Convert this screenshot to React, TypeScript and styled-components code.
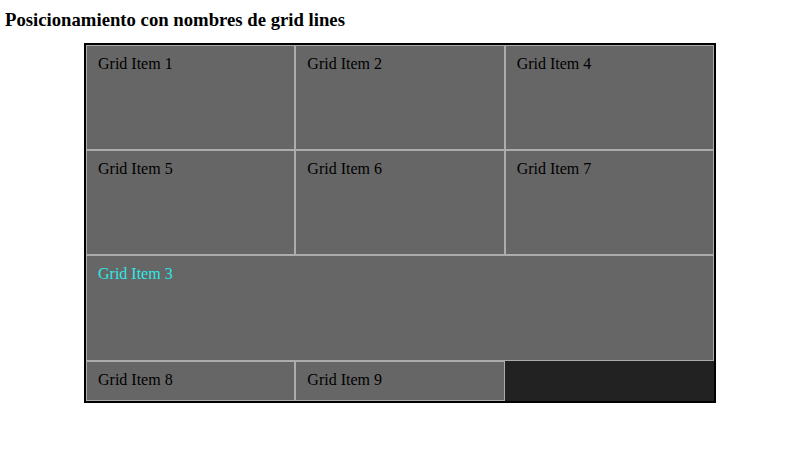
import React from 'react'
import styled, { createGlobalStyle } from 'styled-components'

const GlobalStyle = createGlobalStyle`
  body {
    margin: 0;
    font-family: "Liberation Serif", "Times New Roman", serif;
    background: #fff;
  }
`

const Title = styled.h3`
  margin: 0;
  padding: 9px 5px 0;
  font-size: 18.72px;
  font-weight: bold;
  color: #000;
`

const Container = styled.div`
  box-sizing: border-box;
  width: 632px;
  margin: 12px auto 0;
  display: grid;
  grid-template-columns:
    [col-a] 1fr [col-b] 1fr [col-c] 1fr [col-end];
  grid-template-rows:
    [row-a] 105px [row-b] 105px [row-c] 106px [row-d] auto [row-end];
  background: #222;
  border: 2px solid #000;
`

const Item = styled.div<{ $highlight?: boolean }>`
  padding: 9px 10px 11px 11px;
  background: #666;
  border: 1px solid #acacac;
  font-size: 16px;
  line-height: 18px;
  color: ${(p) => (p.$highlight ? '#2ee8e8' : '#000')};
`

const WideItem = styled(Item)`
  grid-column: col-a / col-end;
  grid-row: row-c / row-d;
`

export default function App() {
  return (
    <>
      <GlobalStyle />
      <Title>Posicionamiento con nombres de grid lines</Title>
      <Container>
        <Item>Grid Item 1</Item>
        <Item>Grid Item 2</Item>
        <WideItem $highlight>Grid Item 3</WideItem>
        <Item>Grid Item 4</Item>
        <Item>Grid Item 5</Item>
        <Item>Grid Item 6</Item>
        <Item>Grid Item 7</Item>
        <Item>Grid Item 8</Item>
        <Item>Grid Item 9</Item>
      </Container>
    </>
  )
}
